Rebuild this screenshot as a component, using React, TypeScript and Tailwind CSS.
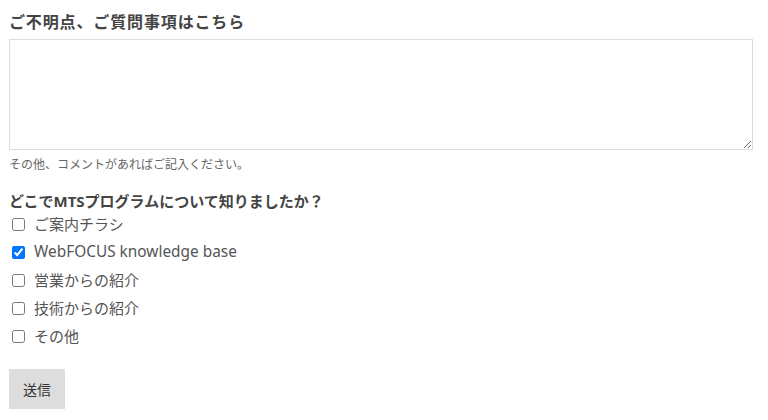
import { useState } from 'react';

const options = ['ご案内チラシ', 'WebFOCUS knowledge base', '営業からの紹介', '技術からの紹介', 'その他'];

export default function App() {
  const [checked, setChecked] = useState<string[]>(['WebFOCUS knowledge base']);

  const toggle = (o: string) =>
    setChecked((c) => (c.includes(o) ? c.filter((x) => x !== o) : [...c, o]));

  return (
    <div className="w-[768px] h-[420px] bg-white overflow-hidden px-[9px] pt-[12px] font-['Noto_Sans','Noto_Sans_CJK_JP',sans-serif] text-[#555]">
      {/* お問い合わせ内容 */}
      <label className="block text-[16px] font-bold leading-[20px] tracking-[0.054em] text-[#444] mb-[7px]">
        ご不明点、ご質問事項はこちら
      </label>
      <textarea className="block w-[744px] h-[111px] border border-[#ddd] bg-white resize-y outline-none p-2" />
      <p className="text-[12px] leading-[18px] mt-[6px] text-[#666]">その他、コメントがあればご記入ください。</p>

      {/* 知ったきっかけ */}
      <p className="text-[15px] font-bold leading-[20px] text-[#444] mt-[17px]">
        どこでMTSプログラムについて知りましたか？
      </p>
      <div className="flex flex-col -mt-[1px]">
        {options.map((o) => (
          <label key={o} className="flex items-center h-[28px] gap-[9px] text-[15px] text-[#555]">
            <input
              type="checkbox"
              checked={checked.includes(o)}
              onChange={() => toggle(o)}
              className="w-[13px] h-[13px] ml-[3px] accent-[#0075ff]"
            />
            <span className={o.startsWith('Web') ? 'text-[15.4px]' : ''}>{o}</span>
          </label>
        ))}
      </div>

      <button className="mt-[19px] w-[56px] h-[40px] bg-[#ddd] text-[14px] text-[#333]">送信</button>
    </div>
  );
}
